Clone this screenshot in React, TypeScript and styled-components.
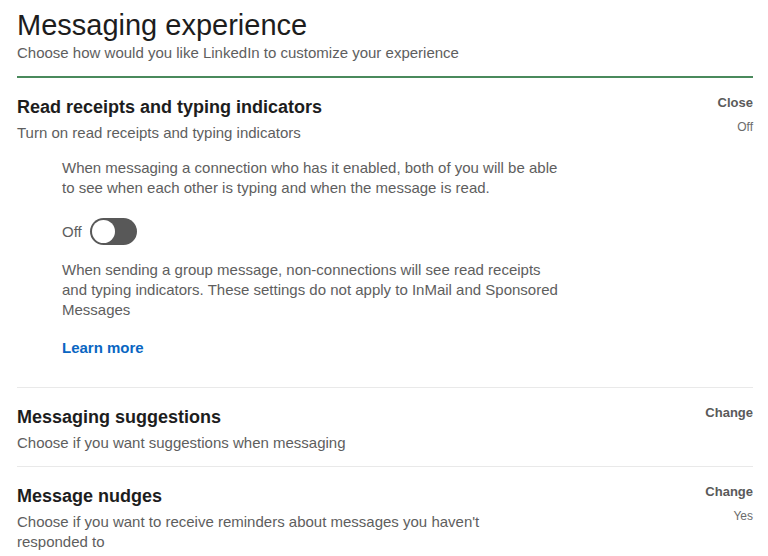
import styled, { createGlobalStyle } from "styled-components";

const GlobalStyle = createGlobalStyle`
  body {
    margin: 0;
    background: #ffffff;
    font-family: "Liberation Sans", Arial, sans-serif;
  }
`;

const Page = styled.div`
  padding: 7px 15px 0 17px;
  width: 736px;
`;

const Header = styled.header`
  padding-bottom: 13px;
  border-bottom: 2px solid #4a8a5c;
`;

const Title = styled.h1`
  margin: 0;
  font-size: 29px;
  font-weight: 400;
  line-height: 36px;
  color: #1d1d1d;
`;

const Subtitle = styled.p`
  margin: 0;
  font-size: 15px;
  line-height: 20px;
  color: #5e5e5e;
`;

const Section = styled.section<{ $last?: boolean }>`
  padding: 17px 0 13px;
  border-bottom: ${(p) => (p.$last ? "none" : "1px solid #e9e9e9")};
`;

const Row = styled.div`
  display: flex;
  justify-content: space-between;
  align-items: flex-start;
`;

const SectionBody = styled.div`
  flex: 1;
`;

const SectionTitle = styled.h2`
  margin: 0 0 4px;
  font-size: 18px;
  font-weight: 700;
  line-height: 24px;
  color: #1d1d1d;
`;

const SectionText = styled.p`
  margin: 0;
  font-size: 15px;
  line-height: 20px;
  color: #5e5e5e;
  max-width: 480px;
`;

const Aside = styled.div`
  display: flex;
  flex-direction: column;
  align-items: flex-end;
  gap: 9px;
`;

const ActionButton = styled.button`
  border: none;
  background: none;
  padding: 0;
  font-family: inherit;
  font-size: 13px;
  font-weight: 700;
  line-height: 16px;
  color: #5a5a5a;
  cursor: pointer;
`;

const Status = styled.span`
  font-size: 12px;
  line-height: 14px;
  color: #6b6b6b;
`;

const Expanded = styled.div`
  padding: 15px 0 16px 45px;
  max-width: 505px;
`;

const Paragraph = styled.p`
  margin: 0;
  font-size: 15px;
  line-height: 20px;
  color: #5e5e5e;
`;

const ToggleRow = styled.label`
  display: flex;
  align-items: center;
  gap: 8px;
  margin: 20px 0 15px;
  font-size: 15px;
  color: #5e5e5e;
`;

const Track = styled.span<{ $on: boolean }>`
  position: relative;
  display: inline-block;
  width: 47px;
  height: 27px;
  border-radius: 14px;
  background: ${(p) => (p.$on ? "#0a66c2" : "#585858")};
`;

const Knob = styled.span<{ $on: boolean }>`
  position: absolute;
  top: 2px;
  left: ${(p) => (p.$on ? "22px" : "2px")};
  width: 23px;
  height: 23px;
  border-radius: 50%;
  background: #ffffff;
`;

const LearnMore = styled.a`
  display: inline-block;
  margin-top: 18px;
  font-size: 15px;
  font-weight: 700;
  line-height: 20px;
  color: #0a66c2;
  text-decoration: none;
`;

export default function App() {
  const on = false;
  return (
    <>
      <GlobalStyle />
      <Page>
        <Header>
          <Title>Messaging experience</Title>
          <Subtitle>Choose how would you like LinkedIn to customize your experience</Subtitle>
        </Header>

        <Section>
          <Row>
            <SectionBody>
              <SectionTitle>Read receipts and typing indicators</SectionTitle>
              <SectionText>Turn on read receipts and typing indicators</SectionText>
            </SectionBody>
            <Aside>
              <ActionButton>Close</ActionButton>
              <Status>Off</Status>
            </Aside>
          </Row>
          <Expanded>
            <Paragraph>
              When messaging a connection who has it enabled, both of you will be able to see
              when each other is typing and when the message is read.
            </Paragraph>
            <ToggleRow>
              Off
              <Track $on={on}>
                <Knob $on={on} />
              </Track>
            </ToggleRow>
            <Paragraph>
              When sending a group message, non-connections will see read receipts and typing
              indicators. These settings do not apply to InMail and Sponsored Messages
            </Paragraph>
            <LearnMore href="#">Learn more</LearnMore>
          </Expanded>
        </Section>

        <Section>
          <Row>
            <SectionBody>
              <SectionTitle>Messaging suggestions</SectionTitle>
              <SectionText>Choose if you want suggestions when messaging</SectionText>
            </SectionBody>
            <Aside>
              <ActionButton>Change</ActionButton>
            </Aside>
          </Row>
        </Section>

        <Section $last>
          <Row>
            <SectionBody>
              <SectionTitle>Message nudges</SectionTitle>
              <SectionText>
                Choose if you want to receive reminders about messages you haven't responded to
              </SectionText>
            </SectionBody>
            <Aside>
              <ActionButton>Change</ActionButton>
              <Status>Yes</Status>
            </Aside>
          </Row>
        </Section>
      </Page>
    </>
  );
}
